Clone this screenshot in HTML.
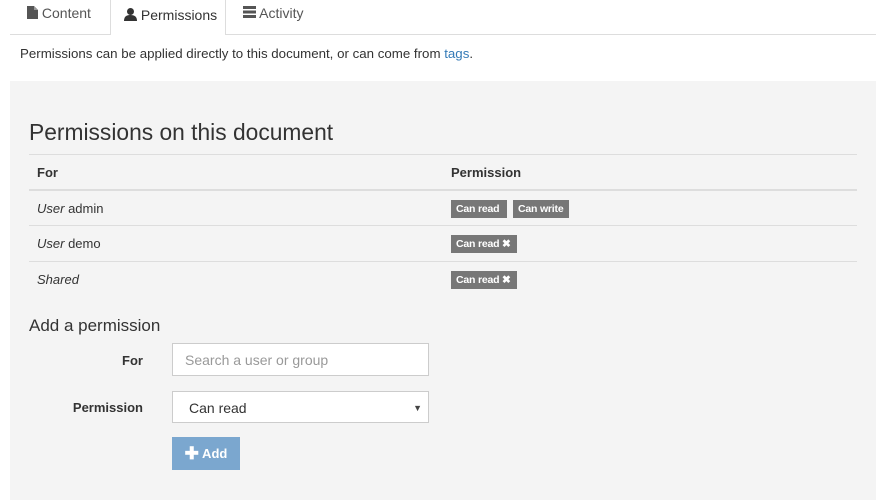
<!DOCTYPE html><html><head><style>
body{margin:0;width:888px;height:500px;background:#fff;font-family:"Liberation Sans",sans-serif;color:#333;position:relative;overflow:hidden;font-size:13px}
.a{position:absolute;white-space:nowrap}
.badge{position:absolute;background:#777;color:#fff;font-size:10.5px;font-weight:bold;height:18px;line-height:18px;padding:0 5px;box-sizing:border-box;letter-spacing:-0.2px}
.line{position:absolute;left:29px;width:828px;height:1px;background:#ddd}
.inp{position:absolute;left:172px;width:257px;background:#fff;border:1px solid #ccc;box-sizing:border-box;font-size:14px;padding-left:12px}
</style></head><body>
<div class="a" style="left:10px;top:34px;width:866px;height:1px;background:#ddd"></div>
<div class="a" style="left:110px;top:0;width:116px;height:35px;background:#fff;border:1px solid #ddd;border-top:none;border-bottom:none;box-sizing:border-box"></div>
<div class="a" style="left:27px;top:5px;font-size:14px;color:#555"><svg width="11" height="13" viewBox="0 0 11 13" style="vertical-align:-1px"><path d="M0 0h7l4 4v9H0z" fill="#555"/><path d="M7 0v4h4" fill="#999"/></svg> Content</div>
<div class="a" style="left:124px;top:7px;font-size:14px;color:#333"><svg width="13" height="13" viewBox="0 0 13 13" style="vertical-align:-1px"><circle cx="6.5" cy="3.5" r="3.5" fill="#333"/><path d="M0 13c0-4 2-6 6.5-6S13 9 13 13z" fill="#333"/></svg> Permissions</div>
<div class="a" style="left:243px;top:5px;font-size:14px;color:#555"><svg width="13" height="12" viewBox="0 0 13 12" style="vertical-align:0"><rect y="0" width="13" height="3" fill="#555"/><rect y="4.5" width="13" height="3" fill="#555"/><rect y="9" width="13" height="3" fill="#555"/></svg> Activity</div>
<div class="a" style="left:20px;top:46px;font-size:13.3px">Permissions can be applied directly to this document, or can come from <span style="color:#337ab7">tags</span>.</div>
<div class="a" style="left:10px;top:81px;width:866px;height:419px;background:#f4f4f4"></div>
<div class="a" style="left:29px;top:119px;font-size:22.8px;color:#333">Permissions on this document</div>
<div class="line" style="top:154px"></div>
<div class="a" style="left:37px;top:165px;font-weight:bold">For</div>
<div class="a" style="left:451px;top:165px;font-weight:bold">Permission</div>
<div class="line" style="top:189px;height:2px"></div>
<div class="a" style="left:37px;top:201px"><i>User</i> admin</div>
<div class="badge" style="left:451px;top:200px;width:56px">Can read</div>
<div class="badge" style="left:513px;top:200px;width:56px">Can write</div>
<div class="line" style="top:225px"></div>
<div class="a" style="left:37px;top:236px"><i>User</i> demo</div>
<div class="badge" style="left:451px;top:235px;width:66px">Can read ✖</div>
<div class="line" style="top:261px"></div>
<div class="a" style="left:37px;top:272px"><i>Shared</i></div>
<div class="badge" style="left:451px;top:271px;width:66px">Can read ✖</div>
<div class="a" style="left:29px;top:316px;font-size:17px">Add a permission</div>
<div class="a" style="left:80px;top:353px;width:63px;text-align:right;font-weight:bold">For</div>
<div class="inp" style="top:343px;height:33px;line-height:33px;color:#999">Search a user or group</div>
<div class="a" style="left:40px;top:400px;width:103px;text-align:right;font-weight:bold">Permission</div>
<div class="inp" style="top:391px;height:32px;line-height:32px;padding-left:16px">Can read<span style="position:absolute;right:6px;font-size:9px;color:#444">▼</span></div>
<div class="a" style="left:172px;top:437px;width:68px;height:33px;background:#7ba7cf;color:#fff;font-weight:bold;font-size:13px;line-height:33px;text-align:center"><span style="font-size:17px;vertical-align:-1px">✚</span> Add</div>
</body></html>
